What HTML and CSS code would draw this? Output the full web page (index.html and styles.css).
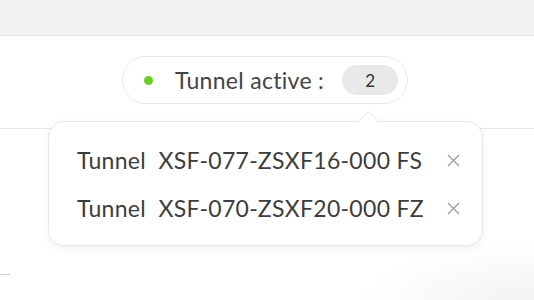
FILE: index.html
```html
<!DOCTYPE html>
<html>
<head>
<meta charset="utf-8">
<link rel="stylesheet" href="styles.css">
</head>
<body>
<div class="topbar"></div>
<div class="toolbar">
  <div class="status-pill">
    <span class="dot"></span>
    <span class="status-label">Tunnel active :</span>
    <span class="count">2</span>
  </div>
</div>
<div class="content">
  <div class="stub"></div>
  <div class="glow"></div>
</div>
<div class="popover">
  <div class="arrow"></div>
  <div class="row">
    <span class="row-text">Tunnel&nbsp;&nbsp;XSF-077-ZSXF16-000 FS</span>
    <svg class="close" width="13" height="13" viewBox="0 0 13 13"><path d="M1 1L12 12M12 1L1 12" stroke="#9c9c9c" stroke-width="1.3" fill="none"/></svg>
  </div>
  <div class="row">
    <span class="row-text">Tunnel&nbsp;&nbsp;XSF-070-ZSXF20-000 FZ</span>
    <svg class="close" width="13" height="13" viewBox="0 0 13 13"><path d="M1 1L12 12M12 1L1 12" stroke="#9c9c9c" stroke-width="1.3" fill="none"/></svg>
  </div>
</div>
</body>
</html>
```
FILE: styles.css
```css
* { box-sizing: border-box; }
html, body { margin: 0; padding: 0; }
body {
  width: 534px;
  height: 300px;
  overflow: hidden;
  background: #fff;
  font-family: Lato, "Open Sans", sans-serif;
  color: #3f3f3f;
  position: relative;
}
.topbar {
  height: 36px;
  background: #f2f2f2;
  border-bottom: 1px solid #e2e2e2;
}
.toolbar {
  height: 93px;
  border-bottom: 1px solid #e8e8e8;
  padding-top: 20px;
  padding-left: 122px;
}
.status-pill {
  display: inline-flex;
  align-items: center;
  height: 48px;
  width: 286px;
  border: 1.5px solid #e9e9e9;
  border-radius: 24px;
  padding-left: 21px;
  background: #fff;
}
.dot {
  width: 9px;
  height: 9px;
  border-radius: 50%;
  background: #6dcc26;
  margin-right: 22px;
}
.status-label {
  font-size: 23px;
  letter-spacing: 0.3px;
  margin-right: 18px;
  color: #444;
}
.count {
  display: inline-flex;
  align-items: center;
  justify-content: center;
  width: 56px;
  height: 30px;
  border-radius: 15px;
  background: #e9e9e9;
  font-size: 17px;
  color: #333;
}
.content {
  height: 171px;
  position: relative;
}
.stub {
  position: absolute;
  left: 0;
  top: 145px;
  width: 10px;
  height: 1px;
  background: #cfcfcf;
}
.glow {
  position: absolute;
  right: 0;
  bottom: 0;
  width: 180px;
  height: 60px;
  background: radial-gradient(ellipse at 100% 100%, rgba(0,0,0,0.05), rgba(0,0,0,0) 70%);
}
.popover {
  position: absolute;
  left: 48px;
  top: 121px;
  width: 435px;
  height: 125px;
  background: #fff;
  border: 1.5px solid #e8e8e8;
  border-radius: 16px;
  box-shadow: 0 3px 8px rgba(0,0,0,0.06);
  padding: 14px 22px 0 28px;
  display: flex;
  flex-direction: column;
}
.arrow {
  position: absolute;
  left: 312px;
  top: -8px;
  width: 15px;
  height: 15px;
  background: #fff;
  border-left: 1.5px solid #e8e8e8;
  border-top: 1.5px solid #e8e8e8;
  transform: rotate(45deg);
}
.row {
  height: 48px;
  display: flex;
  align-items: center;
  justify-content: space-between;
  position: relative;
}
.row-text {
  font-size: 23px;
  letter-spacing: 0.3px;
  color: #3d3d3d;
}
.close { display: block; }
```
